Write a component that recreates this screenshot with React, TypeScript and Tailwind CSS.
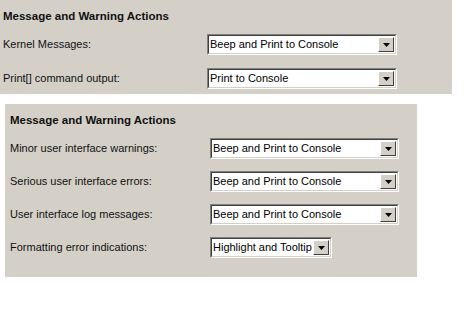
import React from 'react';

const font = { fontFamily: '"Liberation Sans", Arial, sans-serif' };

function Combo({ value, width }: { value: string; width: string }) {
  return (
    <div
      className={`flex h-[21px] ${width} items-center border border-t-[#808080] border-l-[#808080] border-b-[#ffffff] border-r-[#ffffff] bg-white`}
    >
      <div className="flex h-full flex-1 items-center border border-t-[#404040] border-l-[#404040] border-b-[#d4d0c8] border-r-[#d4d0c8] pl-[1px]">
        <span className="flex-1 truncate text-[11px] leading-none text-black">{value}</span>
        <div className="mr-[1px] flex h-[15px] w-[16px] items-center justify-center border border-t-[#ffffff] border-l-[#ffffff] border-b-[#404040] border-r-[#404040] bg-[#d4d0c8]">
          <svg width="7" height="4" viewBox="0 0 7 4">
            <path d="M0 0h7L3.5 4z" fill="#000" />
          </svg>
        </div>
      </div>
    </div>
  );
}

function Row({ label, value, labelW, comboW }: { label: string; value: string; labelW: string; comboW: string }) {
  return (
    <div className="flex h-[21px] items-center">
      <div className={`${labelW} text-[11px] text-[#111]`}>{label}</div>
      <Combo value={value} width={comboW} />
    </div>
  );
}

export default function App() {
  return (
    <div className="h-[315px] w-[474px] bg-white" style={font}>
      <section className="h-[94px] w-[452px] bg-[#d4d0c8] px-[3px] pt-[8px]">
        <h3 className="h-[16px] text-[11.5px] font-bold leading-[16px] text-[#111]">Message and Warning Actions</h3>
        <div className="mt-[10px] flex flex-col gap-[13px]">
          <Row label="Kernel Messages:" value="Beep and Print to Console" labelW="w-[204px]" comboW="w-[190px]" />
          <Row label="Print[] command output:" value="Print to Console" labelW="w-[204px]" comboW="w-[190px]" />
        </div>
      </section>
      <section className="ml-[5px] mt-[10px] h-[173px] w-[412px] bg-[#d4d0c8] px-[5px] pt-[8px]">
        <h3 className="h-[16px] text-[11.5px] font-bold leading-[16px] text-[#111]">Message and Warning Actions</h3>
        <div className="mt-[10px] flex flex-col gap-[12px]">
          <Row label="Minor user interface warnings:" value="Beep and Print to Console" labelW="w-[200px]" comboW="w-[189px]" />
          <Row label="Serious user interface errors:" value="Beep and Print to Console" labelW="w-[200px]" comboW="w-[189px]" />
          <Row label="User interface log messages:" value="Beep and Print to Console" labelW="w-[200px]" comboW="w-[189px]" />
          <Row label="Formatting error indications:" value="Highlight and Tooltip" labelW="w-[200px]" comboW="w-[122px]" />
        </div>
      </section>
    </div>
  );
}
